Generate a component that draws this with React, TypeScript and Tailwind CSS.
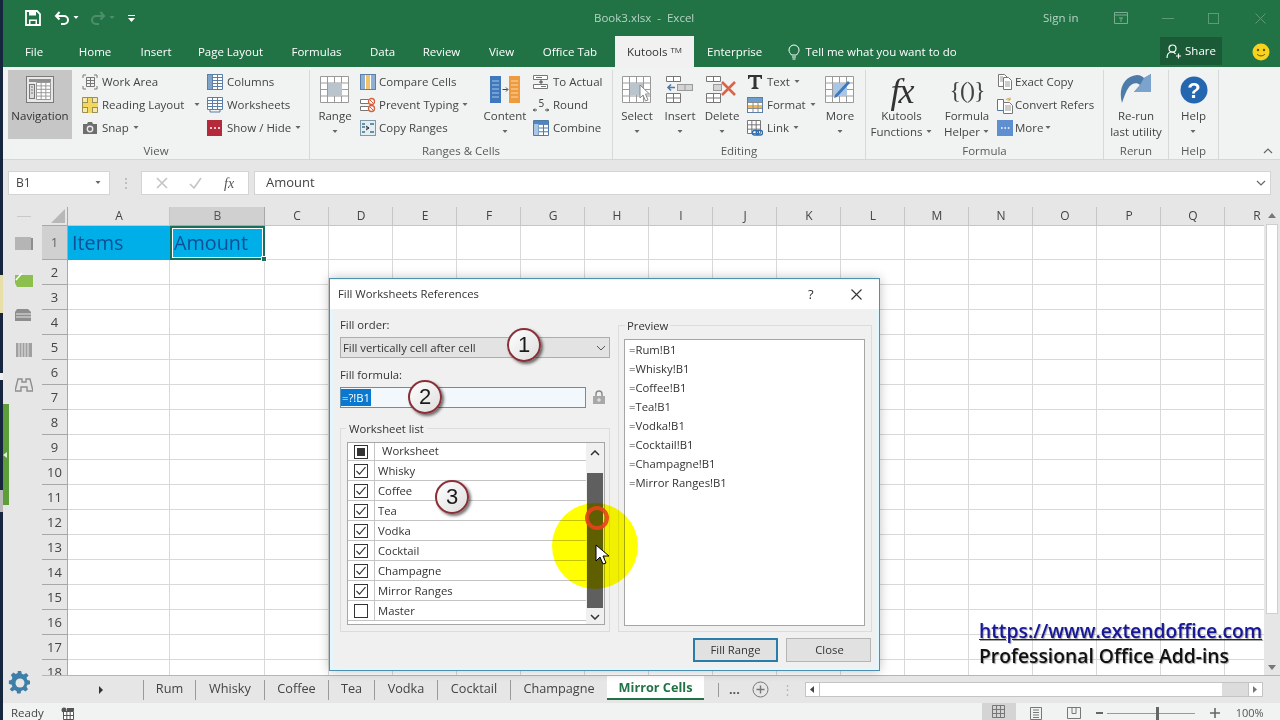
import React from "react";

const COLS = ["A", "B", "C", "D", "E", "F", "G", "H", "I", "J", "K", "L", "M", "N", "O", "P", "Q", "R"];
const ROWS = Array.from({ length: 18 }, (_, i) => i + 1);
const SHEETS = [
  { name: "Rum", w: "w-[52px]" },
  { name: "Whisky", w: "w-[69px]" },
  { name: "Coffee", w: "w-[64px]" },
  { name: "Tea", w: "w-[46px]" },
  { name: "Vodka", w: "w-[63px]" },
  { name: "Cocktail", w: "w-[73px]" },
  { name: "Champagne", w: "w-[97px]" },
];
const WORKSHEETS = ["Whisky", "Coffee", "Tea", "Vodka", "Cocktail", "Champagne", "Mirror Ranges"];
const PREVIEW = ["=Rum!B1", "=Whisky!B1", "=Coffee!B1", "=Tea!B1", "=Vodka!B1", "=Cocktail!B1", "=Champagne!B1", "=Mirror Ranges!B1"];

// grid of thin lines, most ribbon icons are built from this
function gridPath(x: number, y: number, w: number, h: number, cols: number, rows: number) {
  let d = `M${x} ${y}h${w}v${h}h${-w}z`;
  for (let i = 1; i < cols; i++) d += `M${x + (w * i) / cols} ${y}v${h}`;
  for (let i = 1; i < rows; i++) d += `M${x} ${y + (h * i) / rows}h${w}`;
  return d;
}

const Caret = ({ light }: { light?: boolean }) => (
  <svg width="7" height="4" viewBox="0 0 7 4" className="shrink-0">
    <path d="M0.5 0h5l-2.5 3z" fill={light ? "#ffffff" : "#666666"} />
  </svg>
);

const Ico = ({ w = 16, h = 16, children }: { w?: number; h?: number; children: React.ReactNode }) => (
  <svg width={w} height={h} viewBox={`0 0 ${w} ${h}`} className="shrink-0">
    {children}
  </svg>
);

const icons: Record<string, React.ReactNode> = {
  nav: (
    <Ico w={28} h={27}>
      <rect x="0.5" y="0.5" width="27" height="26" fill="#e8e8e8" stroke="#7a7a7a" />
      <rect x="3" y="3" width="22" height="3" fill="#8f8f8f" />
      <path d={gridPath(10.5, 6.5, 14, 17, 3, 5)} fill="#fff" stroke="#9a9a9a" />
      <rect x="3.5" y="8.5" width="5" height="14" fill="#dcdcdc" stroke="#777" />
      <path d="M5 11h2M5 14h2M5 17h2" stroke="#777" />
    </Ico>
  ),
  workArea: (
    <Ico>
      <path d="M1 4V1h3M12 1h3v3M15 12v3h-3M4 15H1v-3" fill="none" stroke="#777" />
      <path d={gridPath(4.5, 3.5, 8, 9, 2, 3)} fill="none" stroke="#777" />
    </Ico>
  ),
  reading: (
    <Ico>
      <rect x="1" y="1" width="15" height="15" fill="#f5e9a8" />
      <path d={gridPath(0.5, 0.5, 15, 15, 3, 3)} fill="none" stroke="#9a8f5a" />
      <rect x="6" y="1" width="4" height="15" fill="#f2d75c" />
      <rect x="1" y="6" width="15" height="4" fill="#f2d75c" />
    </Ico>
  ),
  snap: (
    <Ico>
      <path d="M1 4h4l1-2h4l1 2h4v10H1z" fill="#6e6e6e" />
      <circle cx="8" cy="9" r="3.4" fill="#e8e8e8" />
      <circle cx="8" cy="9" r="2" fill="#6e6e6e" />
    </Ico>
  ),
  columns: (
    <Ico>
      <path d={gridPath(0.5, 0.5, 15, 15, 3, 5)} fill="#fff" stroke="#5b7fa6" />
      <rect x="0.5" y="0.5" width="5" height="15" fill="#7fa3c9" stroke="#5b7fa6" />
    </Ico>
  ),
  worksheets: (
    <Ico>
      <path d={gridPath(0.5, 0.5, 15, 12, 3, 4)} fill="#fff" stroke="#5b7fa6" />
      <path d="M3 13v2h10v-2" fill="none" stroke="#5b7fa6" />
    </Ico>
  ),
  showHide: (
    <Ico>
      <rect x="0" y="0" width="15" height="16" fill="#b52a3a" />
      <path d="M3 8h2M7 8h2M11 8h2" stroke="#fff" strokeWidth="1.6" />
    </Ico>
  ),
  range: (
    <Ico w={30} h={27}>
      <path d={gridPath(0.5, 0.5, 28, 26, 4, 4)} fill="#fff" stroke="#9a9a9a" />
      <rect x="8" y="7" width="14" height="13" fill="#b9c4cc" />
    </Ico>
  ),
  compare: (
    <Ico>
      <rect x="0.5" y="0.5" width="15" height="15" fill="#fff" stroke="#5b7fa6" />
      <rect x="1" y="1" width="4" height="14" fill="#8fb0d0" />
      <rect x="6" y="1" width="4" height="14" fill="#f2c26b" />
      <rect x="11" y="1" width="4" height="14" fill="#8fb0d0" />
    </Ico>
  ),
  prevent: (
    <Ico>
      <path d="M0.5 2.5h8v4h-8zM0.5 9.5h8v4h-8z" fill="#fff" stroke="#777" />
      <circle cx="11.5" cy="4.5" r="3" fill="#fff" stroke="#d4603c" strokeWidth="1.3" />
      <circle cx="11.5" cy="11.5" r="3" fill="#fff" stroke="#d4603c" strokeWidth="1.3" />
      <path d="M9.5 2.5l4 4M9.5 9.5l4 4" stroke="#d4603c" />
    </Ico>
  ),
  copyRanges: (
    <Ico>
      <rect x="0.5" y="0.5" width="15" height="15" fill="#e4eef2" stroke="#7d9aa8" />
      <path d="M2 4h3M2 7h3M10 4h4M10 12h4M2 12h3" stroke="#40718a" strokeWidth="1.5" />
      <path d="M6 6l3 2-3 2M6 8h3" fill="none" stroke="#333" />
    </Ico>
  ),
  content: (
    <Ico w={30} h={27}>
      <rect x="0" y="0" width="11" height="27" fill="#3f78bd" />
      <path d="M2 5h7M2 9h7M2 13h7M2 17h7M2 21h7" stroke="#a9c6e6" />
      <rect x="19" y="0" width="11" height="27" fill="#ee9a3f" />
      <path d="M21 5h7M21 9h7M21 13h7M21 17h7M21 21h7" stroke="#f9d8ac" />
      <path d="M12.5 13.5h5M16 11.5l2 2-2 2" fill="none" stroke="#444" />
    </Ico>
  ),
  toActual: (
    <Ico>
      <path d="M0.5 1.5h14v4h-14zM0.5 10.5h14v4h-14z" fill="#fff" stroke="#777" />
      <path d="M3 3.5h6M8 12.5h5" stroke="#777" />
      <path d="M8 6v4M6 8h4" stroke="#444" />
    </Ico>
  ),
  round: (
    <Ico>
      <text x="5.500" y="10" fontSize="10" fill="#444" fontFamily="'Noto Sans',sans-serif">5</text>
      <path d="M0 13h4M2 11.5L0.5 13 2 14.5M12 13h4M14 11.5l1.5 1.5-1.5 1.5" fill="none" stroke="#444" />
    </Ico>
  ),
  combine: (
    <Ico>
      <path d={gridPath(0.5, 0.5, 15, 15, 3, 4)} fill="#fff" stroke="#4f7aa6" />
      <rect x="1" y="1" width="14" height="3.6" fill="#4f86bd" />
      <rect x="1" y="4" width="4.5" height="11" fill="#a9c6e6" />
    </Ico>
  ),
  select: (
    <Ico w={30} h={27}>
      <path d={gridPath(0.5, 0.5, 28, 26, 4, 4)} fill="#fff" stroke="#9a9a9a" />
      <rect x="8" y="7" width="13" height="12" fill="#b9c4cc" />
      <path d="M18 9v13l3-3 2.5 6 2.5-1-2.5-6h4z" fill="#fff" stroke="#8a8a8a" />
    </Ico>
  ),
  insert: (
    <Ico w={28} h={27}>
      <path d={gridPath(0.5, 0.5, 14, 5, 2, 1)} fill="#fff" stroke="#777" />
      <path d={gridPath(0.5, 17.5, 14, 9, 2, 2)} fill="#fff" stroke="#777" />
      <path d="M2 11.5h7M5 8.5l-3 3 3 3" fill="none" stroke="#4f7aa6" strokeWidth="1.6" />
      <rect x="11.5" y="8.5" width="15" height="6" fill="#d4d4d4" stroke="#9a9a9a" />
      <path d="M19 8.5v6" stroke="#9a9a9a" />
    </Ico>
  ),
  del: (
    <Ico w={32} h={27}>
      <path d={gridPath(0.5, 0.5, 14, 5, 2, 1)} fill="#fff" stroke="#777" />
      <path d={gridPath(0.5, 17.5, 14, 9, 2, 2)} fill="#fff" stroke="#777" />
      <rect x="7.5" y="8.5" width="8" height="6" fill="#d4d4d4" stroke="#9a9a9a" />
      <path d="M16 6l13 13M29 6L16 19" stroke="#d9644a" strokeWidth="2.6" />
    </Ico>
  ),
  text: (
    <Ico>
      <path d="M1 1h14v4h-1l-1-2H9.5v10l2 1v1h-7v-1l2-1V3H3L2 5H1z" fill="#333" />
    </Ico>
  ),
  format: (
    <Ico>
      <rect x="0.5" y="0.5" width="15" height="15" fill="#fff" stroke="#5b7fa6" />
      <rect x="1" y="1" width="14" height="4" fill="#6d9ed0" />
      <rect x="1" y="8" width="14" height="3" fill="#f2b84b" />
      <path d="M1 5.5h14M1 11.5h14M6 5v10M11 5v10" stroke="#8c8c8c" />
    </Ico>
  ),
  link: (
    <Ico>
      <path d={gridPath(0.5, 0.5, 13, 13, 3, 3)} fill="#fff" stroke="#777" />
      <rect x="5.5" y="10.5" width="6" height="4.5" rx="2" fill="none" stroke="#2f6fb0" strokeWidth="1.4" />
      <rect x="9.5" y="10.5" width="6" height="4.5" rx="2" fill="none" stroke="#2f6fb0" strokeWidth="1.4" />
    </Ico>
  ),
  more: (
    <Ico w={30} h={27}>
      <path d={gridPath(0.5, 0.5, 28, 26, 4, 4)} fill="#fff" stroke="#9a9a9a" />
      <rect x="8" y="7" width="14" height="13" fill="#a9c6e6" />
      <path d="M10 19l-1 3 3-1L25 7l-2-2z" fill="#3f78bd" />
    </Ico>
  ),
  exact: (
    <Ico>
      <path d="M1.5 0.5h6l3 3v9h-9z" fill="#fff" stroke="#777" />
      <path d="M6.5 3.5h5l3 3v9h-8z" fill="#fff" stroke="#777" />
      <path d="M8 8h5M8 10h5M8 12h5M3 3h3M3 5h3M3 7h3" stroke="#999" />
    </Ico>
  ),
  convert: (
    <Ico w={18} h={18}>
      <path d="M1.5 3.5h6v11h-6z" fill="#fff" stroke="#4f7aa6" />
      <path d="M7.5 6.5h6l3 3v8h-9z" fill="#fff" stroke="#777" />
      <path d="M9 10h6M9 12h6M9 14h6" stroke="#999" />
      <path d="M10 4c1-2 3-2 4 0M14 1.5V4h-2.5" fill="none" stroke="#d49a3c" />
    </Ico>
  ),
  moreSmall: (
    <Ico>
      <rect x="0" y="0" width="16" height="16" fill="#5f8fd0" />
      <path d="M4 8h1.6M7.4 8H9M10.8 8h1.6" stroke="#fff" strokeWidth="1.6" />
    </Ico>
  ),
  rerun: (
    <span className="-mt-[2px]">
      <Ico w={32} h={30}>
        <path d="M2 29C-2 15 4 2 17 1c3 0 5 1 7 3l7-4v18H14l6-7c-3-3-8-2-11 2-3 4-5 10-7 16z" fill="#4d7cab" />
        <path d="M24 4l7-4v18H14l6-7z" fill="#7ba3cc" />
      </Ico>
    </span>
  ),
  help: (
    <svg width="28" height="28" viewBox="0 0 28 28" className="shrink-0">
      <circle cx="14" cy="14" r="13.5" fill="#2467b0" />
      <text x="14" y="22" textAnchor="middle" fontSize="22" fontWeight="700" fill="#fff" fontFamily="'Liberation Sans',sans-serif">?</text>
    </svg>
  ),
  fx: (
    <span className="font-['Liberation_Serif',serif] italic text-[36px] leading-[30px] text-[#333333] tracking-[-2px]">fx</span>
  ),
  braces: <span className="font-['Liberation_Serif',serif] text-[24px] leading-[28px] tracking-[-1px] text-[#444444]">{"{()}"}</span>,
};

const Small = ({ icon, label, caret, w = "w-auto", gap = "gap-[4px]" }: { icon: string; label: string; caret?: boolean; w?: string; gap?: string }) => (
  <div className={`h-[23px] flex items-center whitespace-nowrap ${gap} ${w}`}>
    <span className="w-[16px] h-[18px] flex items-center justify-center">{icons[icon]}</span>
    <span>{label}</span>
    {caret && <Caret />}
  </div>
);

const Large = ({ icon, lines, caret, w }: { icon: string; lines: string[]; caret?: "line" | "below"; w: string }) => (
  <div className={`flex flex-col items-center whitespace-nowrap ${w}`}>
    <div className="h-[32px] mt-[6px] flex items-start justify-center">{icons[icon]}</div>
    {lines.map((l, i) => (
      <div key={l} className="h-[16px] leading-[16px] flex items-center gap-[3px]">
        {l}
        {caret === "line" && i === lines.length - 1 && <Caret />}
      </div>
    ))}
    {caret === "below" && (
      <div className="h-[16px] flex items-center">
        <Caret />
      </div>
    )}
  </div>
);

const Group = ({ label, w, children }: { label: string; w: string; children: React.ReactNode }) => (
  <div className={`h-[89px] mt-[3px] border-r border-[#d8d8d8] flex flex-col ${w}`}>
    <div className="h-[73px] flex">{children}</div>
    <div className="h-[16px] leading-[16px] text-center text-[#5a5a5a]">{label}</div>
  </div>
);

const Tab = ({ label, w }: { label: string; w: string }) => <div className={`text-center whitespace-nowrap ${w}`}>{label}</div>;

const Badge = ({ n, pos }: { n: number; pos: string }) => (
  <div className={`absolute w-[34px] h-[34px] rounded-full border-[2px] border-[#8a2f37] bg-gradient-to-br from-white to-[#dedede] shadow-[2px_2px_3px_rgba(0,0,0,0.55)] flex items-center justify-center text-[22px] leading-none text-[#1a1a1a] font-['Liberation_Sans',sans-serif] ${pos}`}>
    {n}
  </div>
);

const Check = ({ state }: { state: "on" | "off" | "mixed" }) => (
  <svg width="14" height="14" viewBox="0 0 14 14">
    <rect x="0.5" y="0.5" width="13" height="13" fill="#fff" stroke="#333" />
    {state === "on" && <path d="M2.5 7l3 3.2 6-7" fill="none" stroke="#333" strokeWidth="1.1" />}
    {state === "mixed" && <rect x="3" y="3" width="8" height="8" fill="#333" />}
  </svg>
);

const ListRow = ({ label, state, header }: { label: string; state: "on" | "off" | "mixed"; header?: boolean }) => (
  <div className={`flex border-b border-[#c4c4c4] ${header ? "h-[18px]" : "h-[20px]"}`}>
    <div className="w-[27px] border-r border-[#c4c4c4] flex items-center justify-center">
      <Check state={state} />
    </div>
    <div className={`flex items-center ${header ? "pl-[7px]" : "pl-[3px] pt-[2px]"}`}>{label}</div>
  </div>
);

export default function App() {
  return (
    <div className="relative w-[1280px] h-[720px] overflow-hidden flex bg-[#e6e6e6] font-['Open_Sans',sans-serif] text-[11.5px] text-[#444444]">
      {/* other windows peek out along the left edge */}
      <div className="w-[3px] flex flex-col bg-[#16263f]">
        <div className="h-[275px]" />
        <div className="h-[38px] bg-[#e8dfa8]" />
        <div className="h-[60px]" />
        <div className="h-[7px] bg-[#f0f0f0]" />
        <div className="h-[110px]" />
        <div className="h-[22px] bg-[#b8b8b8]" />
      </div>
      <div className="w-[1277px] flex flex-col">
        {/* title bar */}
        <div className="h-[36px] bg-[#217346] flex items-center relative text-[#b9d3c4]">
          <div className="flex items-center ml-[22px]">
            <svg width="16" height="16" viewBox="0 0 16 16">
              <path d="M1 1h11l3 3v11H1z" fill="none" stroke="#fff" strokeWidth="1.8" />
              <path d="M4 1.5h7v4H4zM4 9.5h8V15H4z" fill="#fff" />
              <rect x="5.5" y="11" width="5" height="3" fill="#217346" />
            </svg>
            <svg width="16" height="16" viewBox="0 0 16 16" className="ml-[13px]">
              <path d="M2 6h8a4 4 0 010 8H7M5.5 2L2 6l3.5 3.5" fill="none" stroke="#fff" strokeWidth="2" />
            </svg>
            <span className="ml-[3px]"><Caret light /></span>
            <svg width="16" height="16" viewBox="0 0 16 16" className="ml-[10px] opacity-20">
              <path d="M14 6H6a4 4 0 000 8h3M10.5 2L14 6l-3.5 3.5" fill="none" stroke="#fff" strokeWidth="2" />
            </svg>
            <span className="ml-[3px] opacity-20"><Caret light /></span>
            <svg width="7" height="7" viewBox="0 0 7 7" className="ml-[12px]">
              <path d="M0 0h7v1H0zM0 3h7L3.5 7z" fill="#fff" />
            </svg>
          </div>
          <div className="absolute left-[591px] whitespace-pre">Book3.xlsx  -  Excel</div>
          <div className="absolute left-[1040px]">Sign in</div>
          <svg width="14" height="12" viewBox="0 0 14 12" className="absolute left-[1111px] opacity-60">
            <path d="M0.5 0.5h13v11h-13zM0.5 3h13M5 6h4M7 6v4" fill="none" stroke="#b9d3c4" />
          </svg>
          <div className="absolute left-[1159px] w-[12px] h-[1px] bg-[#5c9a78]" />
          <div className="absolute left-[1205px] w-[11px] h-[11px] border border-[#5c9a78]" />
          <svg width="11" height="11" viewBox="0 0 11 11" className="absolute left-[1252px]">
            <path d="M0.5 0.5l10 10M10.5 0.5l-10 10" stroke="#5c9a78" />
          </svg>
        </div>
        {/* ribbon tabs */}
        <div className="h-[31px] bg-[#217346] flex items-center text-[#ffffff] relative">
          <Tab label="File" w="w-[20px] ml-[21px]" />
          <Tab label="Home" w="w-[36px] ml-[33px]" />
          <Tab label="Insert" w="w-[32px] ml-[27px]" />
          <Tab label="Page Layout" w="w-[67px] ml-[25px]" />
          <Tab label="Formulas" w="w-[51px] ml-[27px]" />
          <Tab label="Data" w="w-[25px] ml-[28px]" />
          <Tab label="Review" w="w-[39px] ml-[27px]" />
          <Tab label="View" w="w-[27px] ml-[27px]" />
          <Tab label="Office Tab" w="w-[56px] ml-[27px]" />
          <div className="ml-[17px] w-[79px] h-[31px] bg-[#f1f1f1] text-[#333333] flex items-center justify-center whitespace-nowrap">
            Kutools <span className="text-[8px] ml-[3px] -mt-[4px]">TM</span>
          </div>
          <Tab label="Enterprise" w="w-[54px] ml-[13px]" />
          <svg width="12" height="16" viewBox="0 0 12 16" className="ml-[27px]">
            <path d="M3.5 11C2 9 1 8 1 6a5 5 0 0110 0c0 2-1 3-2.5 5zM4 13h4M4.5 15h3" fill="none" stroke="#fff" />
          </svg>
          <Tab label="Tell me what you want to do" w="w-[152px] ml-[5px]" />
          <div className="ml-[203px] w-[62px] h-[28px] self-start mt-[1px] bg-[#1a5a37] flex items-center justify-center gap-[4px]">
            <svg width="15" height="15" viewBox="0 0 15 15">
              <circle cx="6.5" cy="4.5" r="3.5" fill="none" stroke="#fff" strokeWidth="1.2" />
              <path d="M1 14c0-4 2-6 5-6 2 0 3 1 3.500 2M10 12h5M12.500 9.500v5" fill="none" stroke="#fff" strokeWidth="1.2" />
            </svg>
            Share
          </div>
          <svg width="18" height="18" viewBox="0 0 18 18" className="ml-[30px]">
            <circle cx="9" cy="9" r="8.5" fill="#f7d21e" />
            <circle cx="6" cy="7" r="1.2" fill="#6b5300" />
            <circle cx="12" cy="7" r="1.2" fill="#6b5300" />
            <path d="M5 11c2 2.500 6 2.500 8 0" fill="none" stroke="#6b5300" />
          </svg>
        </div>
        {/* ribbon */}
        <div className="h-[93px] bg-[#f1f2f2] flex relative border-b border-[#d6d6d6]">
          <Group label="View" w="w-[307px]">
            <div className="ml-[5px] w-[64px] h-[69px] bg-[#c6c6c6] flex flex-col items-center text-[#333333]">
              <div className="mt-[6px] h-[32px]">{icons.nav}</div>
              <div className="h-[16px] leading-[16px]">Navigation</div>
            </div>
            <div className="ml-[10px] w-[125px] flex flex-col">
              <Small icon="workArea" label="Work Area" />
              <div className="flex items-center">
                <Small icon="reading" label="Reading Layout" />
                <span className="ml-[10px]"><Caret /></span>
              </div>
              <Small icon="snap" label="Snap" caret />
            </div>
            <div className="flex flex-col">
              <Small icon="columns" label="Columns" />
              <Small icon="worksheets" label="Worksheets" />
              <Small icon="showHide" label="Show / Hide" caret />
            </div>
          </Group>
          <Group label="Ranges & Cells" w="w-[303px]">
            <Large icon="range" lines={["Range"]} caret="below" w="w-[50px]" />
            <div className="w-[122px] flex flex-col">
              <Small icon="compare" label="Compare Cells" gap="gap-[3px]" />
              <Small icon="prevent" label="Prevent Typing" caret gap="gap-[3px]" />
              <Small icon="copyRanges" label="Copy Ranges" gap="gap-[3px]" />
            </div>
            <Large icon="content" lines={["Content"]} caret="below" w="w-[46px]" />
            <div className="ml-[5px] flex flex-col">
              <Small icon="toActual" label="To Actual" />
              <Small icon="round" label="Round" />
              <Small icon="combine" label="Combine" />
            </div>
          </Group>
          <Group label="Editing" w="w-[253px]">
            <Large icon="select" lines={["Select"]} caret="below" w="w-[48px]" />
            <Large icon="insert" lines={["Insert"]} caret="below" w="w-[38px]" />
            <Large icon="del" lines={["Delete"]} caret="below" w="w-[46px]" />
            <div className="w-[70px] ml-[2px] flex flex-col">
              <Small icon="text" label="Text" caret />
              <Small icon="format" label="Format" caret />
              <Small icon="link" label="Link" caret />
            </div>
            <Large icon="more" lines={["More"]} caret="below" w="w-[46px]" />
          </Group>
          <Group label="Formula" w="w-[238px]">
            <Large icon="fx" lines={["Kutools", "Functions"]} caret="line" w="w-[71px]" />
            <Large icon="braces" lines={["Formula", "Helper"]} caret="line" w="w-[60px]" />
            <div className="flex flex-col">
              <Small icon="exact" label="Exact Copy" gap="gap-[2px]" />
              <Small icon="convert" label="Convert Refers" gap="gap-[2px]" />
              <Small icon="moreSmall" label="More" caret gap="gap-[2px]" />
            </div>
          </Group>
          <Group label="Rerun" w="w-[65px]">
            <Large icon="rerun" lines={["Re-run", "last utility"]} w="w-[65px]" />
          </Group>
          <Group label="Help" w="w-[50px]">
            <Large icon="help" lines={["Help"]} caret="below" w="w-[50px]" />
          </Group>
          <svg width="10" height="6" viewBox="0 0 10 6" className="absolute right-[7px] top-[81px]">
            <path d="M1 5l4-4 4 4" fill="none" stroke="#666" strokeWidth="1.2" />
          </svg>
        </div>
        {/* formula bar */}
        <div className="h-[47px] pt-[11px] pb-[12px] flex items-stretch text-[#444444]">
          <div className="ml-[5px] w-[102px] bg-white border border-[#d4d4d4] flex items-center justify-between px-[7px] text-[12px]">
            <span>B1</span>
            <Caret />
          </div>
          <div className="w-[31px] flex items-center justify-center text-[#aaaaaa] leading-none">⋮</div>
          <div className="w-[108px] bg-white border border-[#d4d4d4] flex items-center justify-around px-[3px]">
            <svg width="12" height="12" viewBox="0 0 12 12"><path d="M1 1l10 10M11 1L1 11" stroke="#c4c4c4" strokeWidth="1.6" /></svg>
            <svg width="13" height="12" viewBox="0 0 13 12"><path d="M1 7l4 4 7-10" fill="none" stroke="#c4c4c4" strokeWidth="1.6" /></svg>
            <span className="font-['Liberation_Serif',serif] italic text-[14px] text-[#555555]">fx</span>
          </div>
          <div className="ml-[5px] w-[1017px] bg-white border border-[#d4d4d4] flex items-center justify-between pl-[11px] pr-[4px] text-[13px]">
            <span>Amount</span>
            <svg width="10" height="6" viewBox="0 0 10 6"><path d="M1 1l4 4 4-4" fill="none" stroke="#666" strokeWidth="1.2" /></svg>
          </div>
        </div>
        {/* sheet area */}
        <div className="h-[496px] flex">
          <div className="w-[39px] flex flex-col items-center relative">
            <div className="w-[14px] h-[1px] bg-[#c8c8c8] mt-[9px] ml-[3px]" />
            <div className="flex flex-col items-center gap-[17px] mt-[19px] ml-[3px]">
              <svg width="18" height="18" viewBox="0 0 18 18">
                <rect x="2" y="2" width="16" height="12" fill="#8e8e8e" />
                <rect x="0" y="1" width="16" height="13" fill="#b5b5b5" />
              </svg>
              <svg width="18" height="18" viewBox="0 0 18 18">
                <path d="M0 4h18v12H2L0 12z" fill="#8dbf4f" />
                <path d="M1 9L7 2" stroke="#fff" strokeWidth="1.5" />
              </svg>
              <svg width="18" height="18" viewBox="0 0 18 18">
                <path d="M2 3h11l3 3v9H0V6z" fill="#8e8e8e" />
                <path d="M1 8h15M1 11h15" stroke="#e6e6e6" />
              </svg>
              <svg width="18" height="18" viewBox="0 0 18 18">
                <rect x="1" y="2" width="16" height="14" fill="#a0a0a0" />
                <path d="M4 2v14M7 2v14M10 2v14M13 2v14" stroke="#e6e6e6" />
              </svg>
              <svg width="18" height="18" viewBox="0 0 18 18">
                <path d="M3 3h4v3h4V3h4l3 12h-6v-4H6v4H0z" fill="none" stroke="#8e8e8e" strokeWidth="1.4" />
              </svg>
            </div>
            <div className="absolute left-0 top-[197px] w-[6px] h-[101px] bg-[#5e9e3a] flex items-center">
              <svg width="5" height="6" viewBox="0 0 5 6"><path d="M4 0v6L0 3z" fill="#dff0d0" /></svg>
            </div>
            <svg width="24" height="24" viewBox="0 0 24 24" className="absolute left-[5px] top-[464px]">
              <path
                d="M10 1h4l.6 3 2.400 1 2.600-1.700 2.800 2.800L20 8.700l1 2.400 3 .9v4l-3 .6-1 2.400 1.700 2.600-2.800 2.800-2.600-1.700-2.400 1-.6 3h-4l-.6-3-2.400-1-2.600 1.700-2.800-2.800L4 18.700 3 16.300l-3-.6v-4l3-.6 1-2.400L2.300 5.500l2.800-2.800L7.700 4.300l2.400-1z"
                transform="scale(0.88) translate(1,-1)"
                fill="#3d7fa8"
              />
              <circle cx="12" cy="12" r="4.500" fill="#e6e6e6" />
            </svg>
          </div>
          <div className="w-[1238px] flex flex-col">
            <div className="h-[468px] flex">
              <div className="w-[1222px] overflow-hidden">
                <div className="w-[1247px] grid grid-cols-[26px_102px_95px_repeat(16,64px)] grid-rows-[19px_34px_repeat(17,25px)]">
                  <div className="border-r border-b border-[#a8a8a8] flex items-end justify-end pr-[2px] pb-[2px]">
                    <svg width="14" height="14" viewBox="0 0 14 14"><path d="M14 0v14H0z" fill="#b8b8b8" /></svg>
                  </div>
                  {COLS.map((c) => (
                    <div key={c} className={`border-r border-b flex items-center justify-center text-[12px] pl-[1px] ${c === "B" ? "bg-[#d0d0d0] border-[#a8a8a8] text-[#555555]" : "border-[#c6c6c6] text-[#444444]"}`}>
                      {c}
                    </div>
                  ))}
                  {ROWS.map((r) => (
                    <React.Fragment key={r}>
                      <div className={`border-r border-b border-[#a8a8a8] flex items-center justify-center text-[13px] ${r === 1 ? "bg-[#d0d0d0] text-[#666666]" : "pt-[2px]"}`}>{r}</div>
                      {COLS.map((c) => {
                        if (r === 1 && c === "A") {
                          return (
                            <div key={c} className="bg-[#00aee8] flex items-center pl-[4px] text-[19.8px] text-[#0d4f96]">
                              Items
                            </div>
                          );
                        }
                        if (r === 1 && c === "B") {
                          return (
                            <div key={c} className="relative bg-[#00aee8] border-[2px] border-[#17705a] outline outline-white -outline-offset-[3px] flex items-center pl-[2px] text-[19.8px] text-[#0d4f96]">
                              Amount
                              <div className="absolute -right-[4px] -bottom-[4px] w-[6px] h-[6px] bg-[#17705a] border border-white" />
                            </div>
                          );
                        }
                        return <div key={c} className="bg-white border-r border-b border-[#d9d9d9]" />;
                      })}
                    </React.Fragment>
                  ))}
                </div>
              </div>
              <div className="w-[16px] flex flex-col items-center bg-[#e6e6e6]">
                <svg width="8" height="5" viewBox="0 0 8 5" className="mt-[6px]"><path d="M4 0l4 5H0z" fill="#777" /></svg>
                <div className="w-[12px] h-[390px] mt-[6px] bg-white border border-[#cfcfcf]" />
                <svg width="8" height="5" viewBox="0 0 8 5" className="mt-[51px]"><path d="M0 0h8L4 5z" fill="#777" /></svg>
              </div>
            </div>
            <div className="h-[28px] flex items-center border-t border-[#b5b5b5] text-[12.7px]">
              <div className="w-[101px] flex items-center pl-[56px]">
                <svg width="6" height="8" viewBox="0 0 6 8"><path d="M1 0l4 4-4 4z" fill="#333" /></svg>
              </div>
              {SHEETS.map((s) => (
                <div key={s.name} className={`h-[20px] border-l border-[#9a9a9a] flex items-center justify-center pb-[2px] ${s.w}`}>
                  {s.name}
                </div>
              ))}
              <div className="w-[97px] h-[24px] self-start bg-white border-b-[2px] border-[#217346] flex items-center justify-center pt-[2px] font-bold text-[#217346] whitespace-nowrap">
                Mirror Cells
              </div>
              <div className="ml-[14px] h-[14px] border-l border-[#9a9a9a]" />
              <span className="ml-[10px] font-bold text-[#555555]">...</span>
              <svg width="17" height="17" viewBox="0 0 17 17" className="ml-[12px]">
                <circle cx="8.500" cy="8.500" r="7.500" fill="none" stroke="#777" />
                <path d="M8.500 4.500v8M4.500 8.500h8" stroke="#777" strokeWidth="1.4" />
              </svg>
              <span className="ml-[12px] text-[#bbbbbb] leading-none">⋮</span>
              <div className="ml-[11px] w-[458px] h-[15px] bg-[#dcdcdc] flex border border-[#c4c4c4]">
                <div className="w-[14px] bg-white flex items-center justify-center border-r border-[#c4c4c4]">
                  <svg width="4" height="7" viewBox="0 0 4 7"><path d="M4 0v7L0 3.500z" fill="#444" /></svg>
                </div>
                <div className="w-[402px] bg-white" />
                <div className="flex-1" />
                <div className="w-[14px] bg-white flex items-center justify-center border-l border-[#c4c4c4]">
                  <svg width="4" height="7" viewBox="0 0 4 7"><path d="M0 0v7l4-3.500z" fill="#777" /></svg>
                </div>
              </div>
            </div>
          </div>
        </div>
        {/* status bar */}
        <div className="h-[17px] pt-[3px] bg-[#f1f2f2] flex items-center relative">
          <span className="ml-[8px]">Ready</span>
          <svg width="13" height="13" viewBox="0 0 13 13" className="ml-[17px]">
            <circle cx="3" cy="3" r="2.500" fill="#555" />
            <path d={gridPath(2.5, 4.5, 10, 8, 3, 2)} fill="#fff" stroke="#555" />
            <rect x="6" y="1" width="7" height="3" fill="#555" />
          </svg>
          <div className="ml-[908px] w-[34px] h-[17px] -mt-[3px] bg-[#d4d4d4] flex items-center justify-center">
            <svg width="13" height="13" viewBox="0 0 13 13"><path d={gridPath(0.5, 0.5, 12, 12, 3, 3)} fill="none" stroke="#777" /></svg>
          </div>
          <svg width="12" height="13" viewBox="0 0 12 13" className="ml-[14px]">
            <path d="M0.5 0.500h11v12h-11zM3 3h6M3 5.500h6M3 8h6M3 10.500h6" fill="none" stroke="#777" />
          </svg>
          <svg width="14" height="12" viewBox="0 0 14 12" className="ml-[25px]">
            <path d="M0.500 0.500h13v11h-13zM5 0.500v6h4v-6" fill="none" stroke="#777" />
          </svg>
          <div className="ml-[15px] flex items-center">
            <div className="w-[7px] h-[2px] bg-[#666666]" />
            <div className="relative ml-[4px] w-[88px] h-[1px] bg-[#9a9a9a]">
              <div className="absolute left-[49px] -top-[6px] w-[3px] h-[13px] bg-[#666666]" />
            </div>
            <svg width="10" height="10" viewBox="0 0 10 10" className="ml-[15px]"><path d="M5 0v10M0 5h10" stroke="#666" strokeWidth="1.6" /></svg>
          </div>
          <span className="ml-[16px] text-[#555555] text-[11px]">100%</span>
        </div>
      </div>

      {/* dialog */}
      <div className="absolute left-[329px] top-[278px] w-[551px] h-[393px] border border-[#4f8fb0] bg-[#e4f5fc] shadow-[0_0_10px_rgba(0,0,0,0.25)] flex flex-col px-[3px] pb-[3px] pt-[1px] font-['Open_Sans',sans-serif] text-[11.3px] text-[#333333]">
        <div className="h-[29px] -mx-[3px] px-[8px] bg-white flex items-center relative shrink-0">
          <span>Fill Worksheets References</span>
          <span className="absolute left-[478px] text-[13px]">?</span>
          <svg width="11" height="11" viewBox="0 0 11 11" className="absolute left-[521px]"><path d="M0.500 0.500l10 10M10.500 0.500l-10 10" stroke="#333" strokeWidth="1.1" /></svg>
        </div>
        <div className="flex-1 bg-[#f0f0f0] flex pl-[7px] relative">
          <div className="w-[270px] flex flex-col">
            <div className="h-[16px] leading-[16px] mt-[8px]">Fill order:</div>
            <div className="h-[21px] mt-[4px] bg-[#e3e3e3] border border-[#adadad] flex items-center justify-between pl-[2px] pr-[3px] pt-[1px]">
              <span>Fill vertically cell after cell</span>
              <svg width="10" height="6" viewBox="0 0 10 6"><path d="M1 1l4 4 4-4" fill="none" stroke="#555" /></svg>
            </div>
            <div className="h-[16px] leading-[16px] mt-[9px]">Fill formula:</div>
            <div className="flex items-center mt-[4px]">
              <div className="w-[246px] h-[21px] bg-[#f2f8fb] border border-[#5b93b5] flex items-center">
                <span className="bg-[#0a78d0] text-white leading-[17px] px-[1px]">=?!B1</span>
              </div>
              <svg width="14" height="15" viewBox="0 0 14 15" className="ml-[6px]">
                <path d="M4 6V4a3 3 0 016 0v2" fill="none" stroke="#888" strokeWidth="1.4" />
                <rect x="1" y="6" width="12" height="8" fill="#a8a8a8" />
                <path d="M7 8v4M5 10h4" stroke="#eee" />
              </svg>
            </div>
            <div className="h-[204px] mt-[20px] border border-[#dcdcdc]">
              <div className="-mt-[8px] ml-[5px] w-fit px-[3px] h-[16px] leading-[16px] bg-[#f0f0f0]">Worksheet list</div>
              <div className="mt-[5px] ml-[6px] w-[258px] h-[183px] bg-white border border-[#a6a6a6] flex">
                <div className="flex-1 overflow-hidden">
                  <ListRow label="Worksheet" state="mixed" header />
                  {WORKSHEETS.map((w) => (
                    <ListRow key={w} label={w} state="on" />
                  ))}
                  <ListRow label="Master" state="off" />
                </div>
                <div className="w-[18px] bg-[#f0f0f0] flex flex-col items-center">
                  <svg width="10" height="6" viewBox="0 0 10 6" className="mt-[7px]"><path d="M1 5l4-4 4 4" fill="none" stroke="#333" strokeWidth="1.5" /></svg>
                  <div className="w-[16px] h-[135px] mt-[17px] bg-[#5f5f5f]" />
                  <svg width="10" height="6" viewBox="0 0 10 6" className="mt-[6px]"><path d="M1 1l4 4 4-4" fill="none" stroke="#333" strokeWidth="1.5" /></svg>
                </div>
              </div>
            </div>
          </div>
          <div className="ml-[8px] w-[254px] h-[307px] mt-[16px] border border-[#dcdcdc]">
            <div className="-mt-[8px] ml-[6px] w-fit px-[2px] h-[16px] leading-[16px] bg-[#f0f0f0]">Preview</div>
            <div className="mt-[5px] ml-[5px] w-[241px] h-[287px] bg-white border border-[#a6a6a6] pt-[1px] pl-[4px]">
              {PREVIEW.map((p) => (
                <div key={p} className="h-[19px] flex items-center">{p}</div>
              ))}
            </div>
          </div>
          <div className="absolute right-[5px] bottom-[5px] flex gap-[8px]">
            <div className="w-[85px] h-[24px] bg-[#e1e1e1] border-[2px] border-[#2b7ca8] flex items-center justify-center">Fill Range</div>
            <div className="w-[85px] h-[24px] bg-[#e1e1e1] border border-[#b5b5b5] flex items-center justify-center pl-[2px]">Close</div>
          </div>
        </div>
      </div>

      <Badge n={1} pos="left-[507px] top-[328px]" />
      <Badge n={2} pos="left-[408px] top-[380px]" />
      <Badge n={3} pos="left-[435px] top-[480px]" />

      {/* mouse highlight */}
      <div className="absolute left-[552px] top-[503px] w-[86px] h-[86px] rounded-full bg-[#ffff00] mix-blend-multiply" />
      <div className="absolute left-[585px] top-[506px] w-[24px] h-[24px] rounded-full border-[4px] border-[#e8431a] opacity-90" />
      <svg width="15" height="22" viewBox="0 0 15 22" className="absolute left-[595px] top-[544px]">
        <path d="M1 1v16l4-4 3 7 3-1-3-7h6z" fill="#fff" stroke="#000" />
      </svg>

      {/* watermark */}
      <div className="absolute left-[979px] top-[618px] flex flex-col font-['Open_Sans',sans-serif] font-semibold whitespace-nowrap [text-shadow:1px_1px_1px_rgba(0,0,0,0.35)]">
        <div className="text-[19.3px] leading-[26px] underline text-[#17179a]">https://www.extendoffice.com</div>
        <div className="text-[19.3px] leading-[24px] text-[#111111]">Professional Office Add-ins</div>
      </div>
    </div>
  );
}
